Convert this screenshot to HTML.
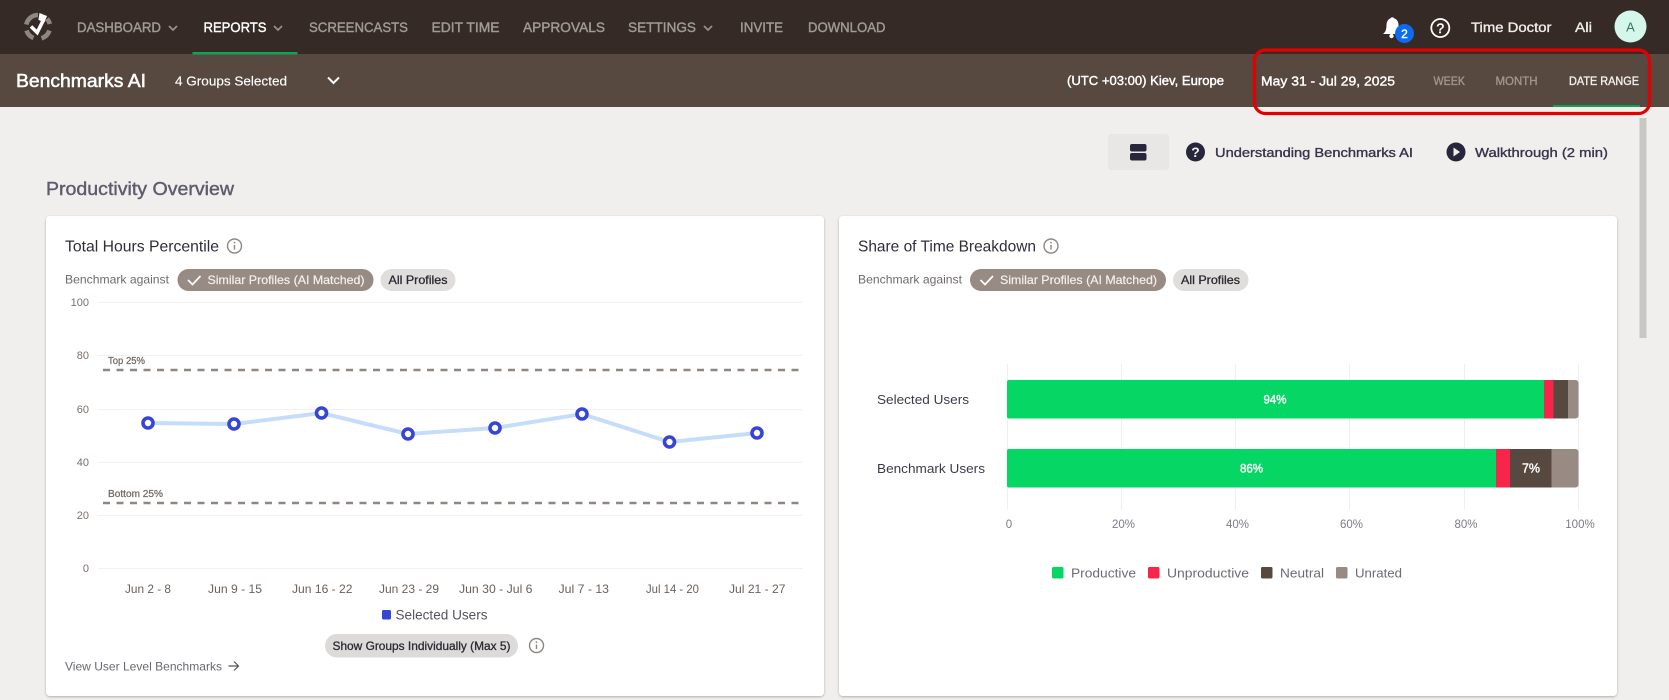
<!DOCTYPE html>
<html lang="en">
<head>
<meta charset="utf-8">
<title>Benchmarks AI</title>
<style>
html,body{margin:0;padding:0;width:1669px;height:700px;overflow:hidden;background:#f1efee}
svg{display:block;position:absolute;left:0;top:0}
text{font-family:"Liberation Sans",Arial,sans-serif}
.nav{font-size:13.5px;fill:#a09a96;stroke:#a09a96;stroke-width:.4px}
.tab{font-size:11.5px;fill:#a2958e;stroke:#a2958e;stroke-width:.35px}
.ttl{font-size:16px;fill:#2f2d3c}
.ba{font-size:12px;fill:#6f6a6e}
.chip1{font-size:12px;fill:#f3f0ee;stroke:#f3f0ee;stroke-width:.2px}
.chip2{font-size:12px;fill:#2b2a33;stroke:#2b2a33;stroke-width:.3px}
.y{font-size:11px;fill:#7b6f69}
.x{font-size:12px;fill:#6c605a}
.lnk{font-size:12px;fill:#6b6873}
.ax{font-size:11.5px;fill:#7d7b88}
.lg{font-size:13px;fill:#6d6b78}
.lb{font-size:13px;fill:#3d3b48}
.bv{font-size:11.5px;fill:#fff;stroke:#fff;stroke-width:.4px}
.dl{font-size:10px;fill:#716862;stroke:#716862;stroke-width:.25px}
.act{font-size:13px;fill:#36354a;stroke:#36354a;stroke-width:.35px}
.w{fill:#fff;stroke:#fff;stroke-width:.4px}
</style>
</head>
<body>
<svg width="1669" height="700" viewBox="0 0 1669 700" xmlns="http://www.w3.org/2000/svg">
<defs>
<filter id="sh" x="-2%" y="-2%" width="104%" height="104%"><feDropShadow dx="0" dy="1" stdDeviation="1.2" flood-color="#000" flood-opacity=".28"/></filter>
<g id="info"><circle r="7" fill="none" stroke="#8f8782" stroke-width="1.4"/><rect x="-.7" y="-1" width="1.4" height="4.6" fill="#8f8782"/><circle cy="-3.4" r=".9" fill="#8f8782"/></g>
</defs>

<!-- top nav -->
<rect width="1669" height="54" fill="#352a26"/>
<rect y="54" width="1669" height="53" fill="#574840"/>
<g fill="none" stroke="#8e8682" stroke-width="4.6">
<path d="M26.3 24.5A12 12 0 0 1 38 15"/>
<path d="M26.5 30.5A12 12 0 0 0 33.5 38"/>
<path d="M41.5 38.3A12 12 0 0 0 49.4 30.5"/>
<path d="M47 18.8A12 12 0 0 1 49.8 24"/>
</g>
<path d="M31 26.5l6.2 6 6-12" fill="none" stroke="#fff" stroke-width="3.6"/>
<path d="M39.5 13l7.5 3-2.6 6.5-6-2.6z" fill="#fff"/>

<text class="nav" x="77" y="32" textLength="84" lengthAdjust="spacingAndGlyphs">DASHBOARD</text>
<path d="M169 26l4 4 4-4" fill="none" stroke="#948f8f" stroke-width="1.8"/>
<text class="nav" x="203.500" y="32" textLength="63" lengthAdjust="spacingAndGlyphs" style="fill:#fff;stroke:#fff">REPORTS</text>
<path d="M274 26l4 4 4-4" fill="none" stroke="#948f8f" stroke-width="1.8"/>
<rect x="192.500" y="52" width="105" height="2.500" fill="#0ba653"/>
<text class="nav" x="309" y="32" textLength="99" lengthAdjust="spacingAndGlyphs">SCREENCASTS</text>
<text class="nav" x="431.500" y="32" textLength="68" lengthAdjust="spacingAndGlyphs">EDIT TIME</text>
<text class="nav" x="523" y="32" textLength="82" lengthAdjust="spacingAndGlyphs">APPROVALS</text>
<text class="nav" x="628" y="32" textLength="68" lengthAdjust="spacingAndGlyphs">SETTINGS</text>
<path d="M704 26l4 4 4-4" fill="none" stroke="#948f8f" stroke-width="1.8"/>
<text class="nav" x="740" y="32" textLength="43" lengthAdjust="spacingAndGlyphs">INVITE</text>
<text class="nav" x="808" y="32" textLength="77.500" lengthAdjust="spacingAndGlyphs">DOWNLOAD</text>

<path d="M1383 34c2.500-2 3.500-4.500 3.500-9 0-3.500 1.800-6 4-6.800a2.200 2.200 0 0 1 3.600 0c2.500.8 4.400 3.300 4.400 6.800 0 4.500 1 7 3.500 9z" fill="#fff"/>
<circle cx="1391.500" cy="36" r="2.200" fill="#fff"/>
<circle cx="1404.500" cy="33.500" r="9.500" fill="#0c6bf0"/>
<text x="1404.500" y="38" text-anchor="middle" class="w" style="font-size:12px">2</text>
<circle cx="1440.300" cy="28" r="9" fill="none" stroke="#fff" stroke-width="1.8"/>
<text x="1440.300" y="33" text-anchor="middle" class="w" style="font-size:14px">?</text>
<text x="1471" y="32" textLength="80.500" lengthAdjust="spacingAndGlyphs" style="font-size:13.500px;fill:#efecea;stroke:#efecea;stroke-width:.35px">Time Doctor</text>
<text x="1575" y="32" textLength="17" lengthAdjust="spacingAndGlyphs" style="font-size:13.500px;fill:#efecea;stroke:#efecea;stroke-width:.35px">Ali</text>
<circle cx="1630.500" cy="26.500" r="16" fill="#d5f7eb"/>
<text x="1630.500" y="31.500" text-anchor="middle" style="font-size:13px;fill:#37776a">A</text>

<!-- sub header -->
<text x="16" y="87" textLength="130" lengthAdjust="spacingAndGlyphs" class="w" style="font-size:18px;stroke-width:.5px">Benchmarks AI</text>
<text x="175" y="85.500" textLength="112" lengthAdjust="spacingAndGlyphs" style="font-size:13px;fill:#fff;stroke:#fff;stroke-width:.15px">4 Groups Selected</text>
<path d="M328 77.500l5.500 5.500 5.500-5.500" fill="none" stroke="#fff" stroke-width="2"/>
<text x="1067" y="85" textLength="157" lengthAdjust="spacingAndGlyphs" class="w" style="font-size:12.500px">(UTC +03:00) Kiev, Europe</text>
<text x="1261" y="85.500" textLength="134" lengthAdjust="spacingAndGlyphs" class="w" style="font-size:13px">May 31 - Jul 29, 2025</text>
<text class="tab" x="1433.500" y="85" textLength="31.500" lengthAdjust="spacingAndGlyphs">WEEK</text>
<text class="tab" x="1495.500" y="85" textLength="42" lengthAdjust="spacingAndGlyphs">MONTH</text>
<text class="tab" x="1569" y="85" textLength="70" lengthAdjust="spacingAndGlyphs" style="fill:#f4f1ef;stroke:#f4f1ef">DATE RANGE</text>
<rect x="1553" y="105" width="87" height="2" fill="#0ba653"/>
<rect x="1254.500" y="50" width="395" height="63.500" rx="11" fill="none" stroke="#e20000" stroke-width="3.200"/>

<!-- toolbar -->
<rect x="1639.500" y="118" width="7" height="220" fill="#c9c7c5"/>
<rect x="1108" y="134" width="61" height="36" rx="3" fill="#e8e7e6"/>
<rect x="1130" y="144" width="16.500" height="7.500" rx="2" fill="#27263a"/>
<rect x="1130" y="153" width="16.500" height="7.500" rx="2" fill="#27263a"/>
<circle cx="1195.500" cy="152" r="9.500" fill="#27263a"/>
<text x="1195.500" y="157" text-anchor="middle" style="font-size:14px;font-weight:700;fill:#f1efee">?</text>
<text class="act" x="1215" y="157" textLength="198" lengthAdjust="spacingAndGlyphs">Understanding Benchmarks AI</text>
<circle cx="1456" cy="152" r="9.500" fill="#27263a"/>
<path d="M1453.500 147.500l6.500 4.500-6.500 4.500z" fill="#f1efee"/>
<text class="act" x="1475" y="157" textLength="133" lengthAdjust="spacingAndGlyphs">Walkthrough (2 min)</text>
<text x="46" y="195" textLength="188" lengthAdjust="spacingAndGlyphs" style="font-size:18px;fill:#5d5c6c;stroke:#5d5c6c;stroke-width:.4px">Productivity Overview</text>

<!-- left card -->
<rect x="46" y="216" width="778" height="480" rx="4" fill="#fff" filter="url(#sh)"/>
<text class="ttl" x="65" y="251.500" textLength="154" lengthAdjust="spacingAndGlyphs">Total Hours Percentile</text>
<use href="#info" x="234.500" y="246"/>
<text class="ba" x="65" y="283.500" textLength="104" lengthAdjust="spacingAndGlyphs">Benchmark against</text>
<rect x="177.500" y="269" width="196" height="22" rx="11" fill="#978b84"/>
<path d="M188 280l4.500 4.500 8-8.500" fill="none" stroke="#fff" stroke-width="1.700"/>
<text class="chip1" x="207.500" y="284" textLength="157" lengthAdjust="spacingAndGlyphs">Similar Profiles (AI Matched)</text>
<rect x="380.500" y="269" width="75" height="22" rx="11" fill="#e0dedc"/>
<text class="chip2" x="388.500" y="284" textLength="59" lengthAdjust="spacingAndGlyphs">All Profiles</text>

<path d="M98 302.500H803M98 355.500H803M98 409.500H803M98 462.500H803M98 515.500H803M98 568.500H803" stroke="#f2f0f0" stroke-width="1"/>
<g text-anchor="end">
<text class="y" x="89" y="306">100</text>
<text class="y" x="89" y="359">80</text>
<text class="y" x="89" y="413">60</text>
<text class="y" x="89" y="466">40</text>
<text class="y" x="89" y="519">20</text>
<text class="y" x="89" y="572">0</text>
</g>
<text class="dl" x="108" y="364" textLength="37" lengthAdjust="spacingAndGlyphs">Top 25%</text>
<text class="dl" x="108" y="497" textLength="55" lengthAdjust="spacingAndGlyphs">Bottom 25%</text>
<path d="M103 370H800M103 503H800" stroke="#8f8782" stroke-width="2.600" stroke-dasharray="7 6.500" fill="none"/>
<polyline points="148,423 234,424 321.500,413 408,434 495,428 582,414 669.500,442 757,433" fill="none" stroke="#c5dcfb" stroke-width="4"/>
<g fill="#fff" stroke="#3644d8" stroke-width="3.600">
<circle cx="148" cy="423" r="5"/><circle cx="234" cy="424" r="5"/><circle cx="321.500" cy="413" r="5"/><circle cx="408" cy="434" r="5"/><circle cx="495" cy="428" r="5"/><circle cx="582" cy="414" r="5"/><circle cx="669.500" cy="442" r="5"/><circle cx="757" cy="433" r="5"/>
</g>
<text class="x" x="125" y="593" textLength="46" lengthAdjust="spacingAndGlyphs">Jun 2 - 8</text>
<text class="x" x="208" y="593" textLength="54" lengthAdjust="spacingAndGlyphs">Jun 9 - 15</text>
<text class="x" x="292" y="593" textLength="60.500" lengthAdjust="spacingAndGlyphs">Jun 16 - 22</text>
<text class="x" x="379" y="593" textLength="60" lengthAdjust="spacingAndGlyphs">Jun 23 - 29</text>
<text class="x" x="459" y="593" textLength="73.500" lengthAdjust="spacingAndGlyphs">Jun 30 - Jul 6</text>
<text class="x" x="558.500" y="593" textLength="50.500" lengthAdjust="spacingAndGlyphs">Jul 7 - 13</text>
<text class="x" x="646" y="593" textLength="53" lengthAdjust="spacingAndGlyphs">Jul 14 - 20</text>
<text class="x" x="729" y="593" textLength="56.500" lengthAdjust="spacingAndGlyphs">Jul 21 - 27</text>
<rect x="382" y="610" width="9" height="9.500" rx="1.500" fill="#3644d8"/>
<text x="395.500" y="619.500" textLength="92" lengthAdjust="spacingAndGlyphs" style="font-size:13.500px;fill:#55535f">Selected Users</text>
<rect x="325" y="634" width="193" height="23.500" rx="11.750" fill="#dddbd9"/>
<text class="chip2" x="332.500" y="650" textLength="178" lengthAdjust="spacingAndGlyphs">Show Groups Individually (Max 5)</text>
<use href="#info" x="536.500" y="645.500"/>
<text class="lnk" x="65" y="670.500" textLength="157" lengthAdjust="spacingAndGlyphs">View User Level Benchmarks</text>
<path d="M228.500 666H238M234 661.500l4.500 4.500-4.500 4.500" fill="none" stroke="#55535f" stroke-width="1.200"/>

<!-- right card -->
<rect x="839" y="216" width="778" height="480" rx="4" fill="#fff" filter="url(#sh)"/>
<text class="ttl" x="858" y="251.500" textLength="178" lengthAdjust="spacingAndGlyphs">Share of Time Breakdown</text>
<use href="#info" x="1051" y="246"/>
<text class="ba" x="858" y="283.500" textLength="104" lengthAdjust="spacingAndGlyphs">Benchmark against</text>
<rect x="970" y="269" width="196" height="22" rx="11" fill="#978b84"/>
<path d="M980.500 280l4.500 4.500 8-8.500" fill="none" stroke="#fff" stroke-width="1.700"/>
<text class="chip1" x="1000" y="284" textLength="157" lengthAdjust="spacingAndGlyphs">Similar Profiles (AI Matched)</text>
<rect x="1173" y="269" width="75.500" height="22" rx="11" fill="#e0dedc"/>
<text class="chip2" x="1181" y="284" textLength="59" lengthAdjust="spacingAndGlyphs">All Profiles</text>

<path d="M1007.500 364V510M1121.500 364V510M1235.500 364V510M1349.500 364V510M1464.500 364V510M1578.500 364V510" stroke="#f0eeee" stroke-width="1"/>

<path d="M1009 380H1544V418.500H1009a2 2 0 0 1-2-2V382a2 2 0 0 1 2-2z" fill="#05d664"/>
<rect x="1544" y="380" width="9.500" height="38.500" fill="#f5264a"/>
<rect x="1553.500" y="380" width="14.500" height="38.500" fill="#574840"/>
<path d="M1568 380H1575.500a3 3 0 0 1 3 3V415.500a3 3 0 0 1-3 3H1568z" fill="#978b84"/>
<path d="M1009 449H1496V487.500H1009a2 2 0 0 1-2-2V451a2 2 0 0 1 2-2z" fill="#05d664"/>
<rect x="1496" y="449" width="14" height="38.500" fill="#f5264a"/>
<rect x="1510" y="449" width="41.500" height="38.500" fill="#574840"/>
<path d="M1551.500 449H1575.500a3 3 0 0 1 3 3V484.500a3 3 0 0 1-3 3H1551.500z" fill="#978b84"/>
<text class="bv" x="1275" y="403.500" text-anchor="middle">94%</text>
<text class="bv" x="1251.500" y="472.500" text-anchor="middle">86%</text>
<text class="bv" x="1531" y="472.500" text-anchor="middle" style="font-size:12.500px">7%</text>
<text class="lb" x="877" y="404" textLength="92" lengthAdjust="spacingAndGlyphs">Selected Users</text>
<text class="lb" x="877" y="473" textLength="108" lengthAdjust="spacingAndGlyphs">Benchmark Users</text>
<g text-anchor="middle">
<text class="ax" x="1009" y="528">0</text>
<text class="ax" x="1123.500" y="528">20%</text>
<text class="ax" x="1237.500" y="528">40%</text>
<text class="ax" x="1351.500" y="528">60%</text>
<text class="ax" x="1466" y="528">80%</text>
<text class="ax" x="1580" y="528">100%</text>
</g>
<rect x="1052" y="567" width="11.500" height="11.500" rx="1.500" fill="#05d664"/>
<text class="lg" x="1071" y="577.500" textLength="65" lengthAdjust="spacingAndGlyphs">Productive</text>
<rect x="1148" y="567" width="11.500" height="11.500" rx="1.500" fill="#f5264a"/>
<text class="lg" x="1167" y="577.500" textLength="82" lengthAdjust="spacingAndGlyphs">Unproductive</text>
<rect x="1261" y="567" width="11.500" height="11.500" rx="1.500" fill="#574840"/>
<text class="lg" x="1280" y="577.500" textLength="44" lengthAdjust="spacingAndGlyphs">Neutral</text>
<rect x="1336" y="567" width="11.500" height="11.500" rx="1.500" fill="#978b84"/>
<text class="lg" x="1355" y="577.500" textLength="47" lengthAdjust="spacingAndGlyphs">Unrated</text>
</svg>
</body>
</html>
